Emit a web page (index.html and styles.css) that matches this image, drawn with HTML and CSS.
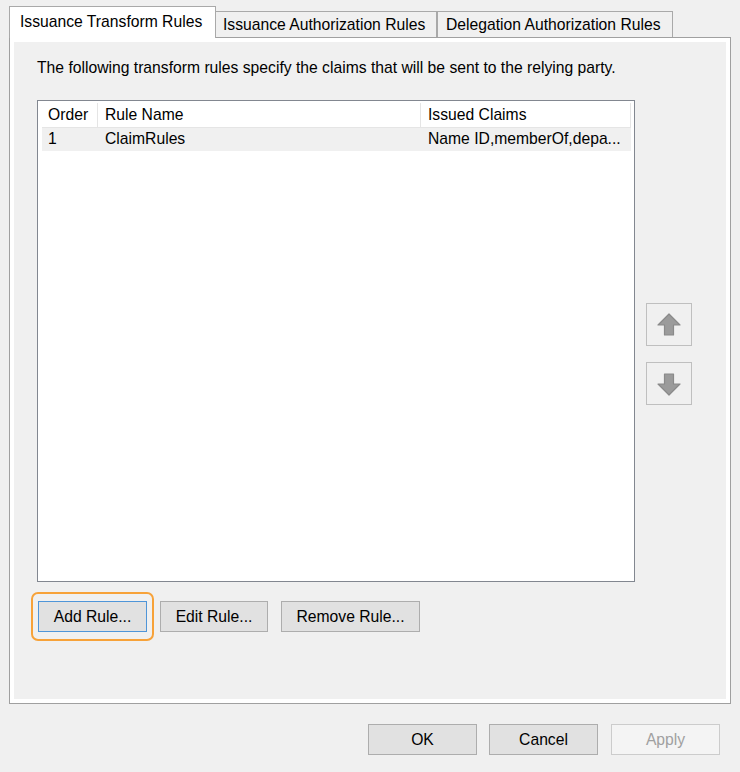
FILE: index.html
```html
<!DOCTYPE html>
<html>
<head>
<meta charset="utf-8">
<link rel="stylesheet" href="styles.css">
</head>
<body>
<div class="dialog">
  <div class="tabs">
    <div class="tab active">Issuance Transform Rules</div>
    <div class="tab t2">Issuance Authorization Rules</div>
    <div class="tab t3">Delegation Authorization Rules</div>
  </div>
  <div class="panel">
    <div class="page">
      <p class="desc">The following transform rules specify the claims that will be sent to the relying party.</p>
      <div class="list-row">
        <div class="listbox">
          <div class="lv-head">
            <div class="col c-order">Order</div>
            <div class="col c-name">Rule Name</div>
            <div class="col c-claims">Issued Claims</div>
          </div>
          <div class="lv-row">
            <div class="col c-order">1</div>
            <div class="col c-name">ClaimRules</div>
            <div class="col c-claims">Name ID,memberOf,depa...</div>
          </div>
        </div>
        <div class="movers">
          <div class="mover">
            <svg width="26" height="26" viewBox="0 0 26 26"><path d="M13 2 L24 13 H17.5 V23 H8.5 V13 H2 Z" fill="#9b9b9b" stroke="#8a8a8a" stroke-width="1.2" stroke-linejoin="round"/></svg>
          </div>
          <div class="mover">
            <svg width="26" height="26" viewBox="0 0 26 26"><path d="M13 24 L24 13 H17.5 V3 H8.5 V13 H2 Z" fill="#9b9b9b" stroke="#8a8a8a" stroke-width="1.2" stroke-linejoin="round"/></svg>
          </div>
        </div>
      </div>
      <div class="rule-buttons">
        <div class="focus-ring"><button class="btn default">Add Rule...</button></div>
        <button class="btn w108">Edit Rule...</button>
        <button class="btn w139">Remove Rule...</button>
      </div>
    </div>
  </div>
  <div class="footer">
    <button class="btn w109">OK</button>
    <button class="btn w109 mid">Cancel</button>
    <button class="btn w109 disabled">Apply</button>
  </div>
</div>
</body>
</html>
```
FILE: styles.css
```css
html, body {
  margin: 0;
  padding: 0;
  background: #f0f0f0;
}
body {
  font-family: "Liberation Sans", Arial, sans-serif;
  font-size: 15.7px;
  color: #000;
  width: 740px;
  height: 772px;
  overflow: hidden;
}
.dialog {
  padding: 6px 0 0 9px;
}
.tabs {
  display: flex;
  align-items: flex-end;
  height: 31px;
  position: relative;
  z-index: 2;
}
.tab {
  box-sizing: border-box;
  height: 26px;
  border: 1px solid #a9a9a9;
  border-bottom: none;
  background: #f0f0f0;
  padding: 4px 0 0 6px;
  white-space: nowrap;
  line-height: 18px;
}
.tab.active {
  width: 207px;
  height: 32px;
  margin-bottom: -1px;
  background: #fff;
  padding: 6px 0 0 10px;
}
.tab.t2 {
  width: 221px;
  border-left: none;
  padding-left: 7px;
}
.tab.t3 {
  width: 236px;
  border-left: 1px solid #a9a9a9;
  padding-left: 8px;
}
.panel {
  box-sizing: border-box;
  width: 722px;
  height: 667px;
  border: 1px solid #a0a0a0;
  background: #fff;
  padding: 4px;
  position: relative;
  z-index: 1;
}
.page {
  box-sizing: border-box;
  height: 100%;
  background: #f0f0f0;
  padding: 16px 0 0 23px;
}
.desc {
  margin: 0 0 22px 0;
  line-height: 20px;
}
.list-row {
  display: flex;
}
.listbox {
  box-sizing: border-box;
  width: 598px;
  height: 482px;
  border: 1px solid #828790;
  background: #fff;
  padding: 2px 3px 0 4px;
}
.lv-head, .lv-row {
  display: flex;
  height: 25px;
  line-height: 24px;
}
.lv-head .col {
  border-right: 1px solid #e5e5e5;
  border-bottom: 1px solid #e5e5e5;
}
.lv-row {
  background: #f0f0f0;
  height: 23px;
  line-height: 22px;
}
.col {
  box-sizing: border-box;
  padding-left: 6px;
  white-space: nowrap;
  overflow: hidden;
}
.c-order { width: 56px; }
.c-name { width: 323px; padding-left: 7px; }
.c-claims { width: 210px; padding-left: 7px; }
.movers {
  display: flex;
  flex-direction: column;
  gap: 16px;
  margin: 203px 0 0 11px;
}
.mover {
  box-sizing: border-box;
  width: 46px;
  height: 43px;
  border: 1px solid #bfbfbf;
  background: #f0f0f0;
  display: flex;
  align-items: center;
  justify-content: center;
}
.rule-buttons {
  display: flex;
  align-items: center;
  margin-top: 10px;
  margin-left: -6px;
}
.focus-ring {
  box-sizing: border-box;
  border: 2.5px solid #f7a239;
  border-radius: 7px;
  padding: 7px 5px;
  margin-right: 6px;
}
.btn {
  box-sizing: border-box;
  height: 31px;
  border: 1px solid #adadad;
  background: #e1e1e1;
  font-family: "Liberation Sans", Arial, sans-serif;
  font-size: 15.7px;
  color: #000;
  padding: 0;
  margin: 0;
}
.btn.default {
  width: 109px;
  border-color: #4f95d8;
}
.w108 { width: 108px; margin-right: 13px; }
.w139 { width: 139px; }
.w109 { width: 109px; }
.footer {
  display: flex;
  justify-content: flex-end;
  width: 711px;
  margin-top: 20px;
}
.btn.mid {
  margin: 0 13px 0 12px;
}
.btn.disabled {
  background: #f4f4f4;
  border-color: #cccccc;
  color: #a0a0a0;
}
```
